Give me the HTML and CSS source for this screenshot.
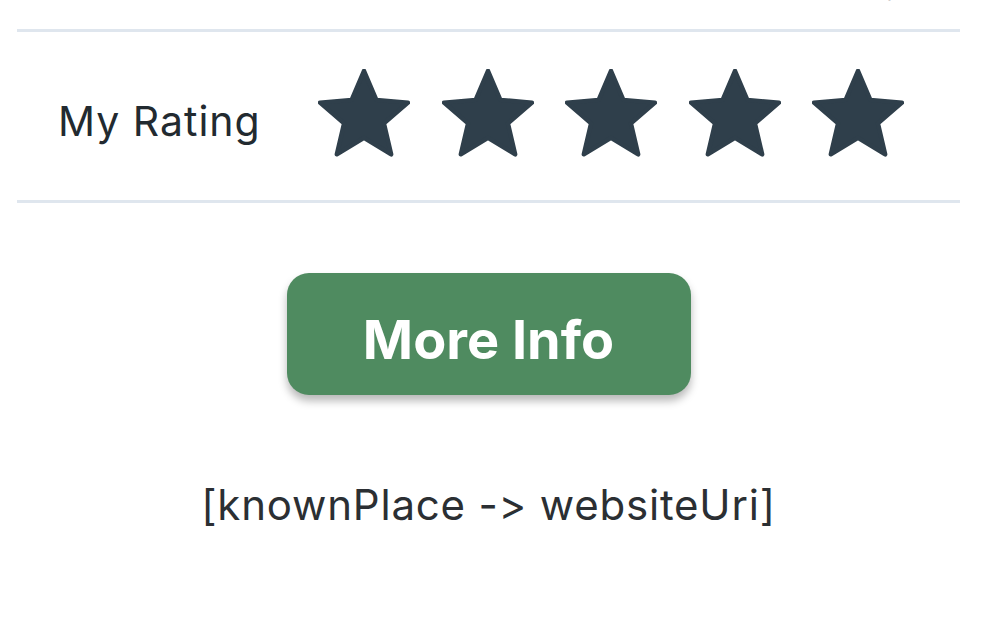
FILE: index.html
```html
<!DOCTYPE html>
<html>
<head>
<meta charset="utf-8">
<link rel="stylesheet" href="styles.css">
</head>
<body>
<div class="page">
  <div class="row prev-row">
    <span class="prev-label">Visited</span>
    <span class="prev-value">Yesterday</span>
  </div>
  <div class="row rating-row">
    <span class="label">My Rating</span>
    <div class="stars">
      <svg class="star" viewBox="1.6 1.6 20.8 20" width="92" height="88"><path d="M12 17.27L18.18 21l-1.64-7.03L22 9.24l-7.19-.61L12 2 9.19 8.63 2 9.24l5.46 4.73L5.82 21z"/></svg>
      <svg class="star" viewBox="1.6 1.6 20.8 20" width="92" height="88"><path d="M12 17.27L18.18 21l-1.64-7.03L22 9.24l-7.19-.61L12 2 9.19 8.63 2 9.24l5.46 4.73L5.82 21z"/></svg>
      <svg class="star" viewBox="1.6 1.6 20.8 20" width="92" height="88"><path d="M12 17.27L18.18 21l-1.64-7.03L22 9.24l-7.19-.61L12 2 9.19 8.63 2 9.24l5.46 4.73L5.82 21z"/></svg>
      <svg class="star" viewBox="1.6 1.6 20.8 20" width="92" height="88"><path d="M12 17.27L18.18 21l-1.64-7.03L22 9.24l-7.19-.61L12 2 9.19 8.63 2 9.24l5.46 4.73L5.82 21z"/></svg>
      <svg class="star" viewBox="1.6 1.6 20.8 20" width="92" height="88"><path d="M12 17.27L18.18 21l-1.64-7.03L22 9.24l-7.19-.61L12 2 9.19 8.63 2 9.24l5.46 4.73L5.82 21z"/></svg>
    </div>
  </div>
  <div class="actions">
    <button class="more-btn">More Info</button>
    <p class="uri">[knownPlace -&gt; websiteUri]</p>
  </div>
</div>
</body>
</html>
```

FILE: styles.css
```css
html, body {
  margin: 0;
  padding: 0;
  background: #ffffff;
  overflow: hidden;
}
.page {
  width: 943px;
  margin-left: 17px;
  margin-top: -70px;
  font-family: Inter, "Open Sans", sans-serif;
  color: #222a30;
}
.row {
  display: flex;
  align-items: center;
  border-bottom: 3px solid #dfe6ee;
  box-sizing: border-box;
}
.prev-row {
  height: 102px;
  justify-content: space-between;
  padding: 0 52px 0 41px;
  font-size: 40px;
  line-height: 1;
}
.prev-row .prev-value {
  position: relative;
  top: -2px;
  letter-spacing: 1px;
}
.prev-label {
  visibility: hidden;
}
.rating-row {
  height: 171px;
  padding-left: 41px;
}
.label {
  font-size: 41px;
  letter-spacing: 1px;
  color: #222a30;
  width: 260px;
  padding-top: 10px;
}
.stars {
  display: flex;
  gap: 31.5px;
  margin-top: -6px;
}
.star {
  display: block;
  fill: #2f3f4b;
  stroke: #2f3f4b;
  stroke-width: 1;
  stroke-linejoin: round;
}
.actions {
  display: flex;
  flex-direction: column;
  align-items: center;
  padding-top: 70px;
}
.more-btn {
  width: 404px;
  height: 122px;
  border: none;
  border-radius: 22px;
  background: #4f8b60;
  color: #ffffff;
  font-family: Inter, "Open Sans", sans-serif;
  font-weight: 700;
  font-size: 54px;
  letter-spacing: 0px;
  box-shadow: 0 6px 8px rgba(0, 0, 0, 0.28);
  padding: 10px 0 0 0;
}
.uri {
  margin: 84px 0 0 0;
  font-size: 42px;
  color: #2b2f33;
  letter-spacing: 0.8px;
}
```
